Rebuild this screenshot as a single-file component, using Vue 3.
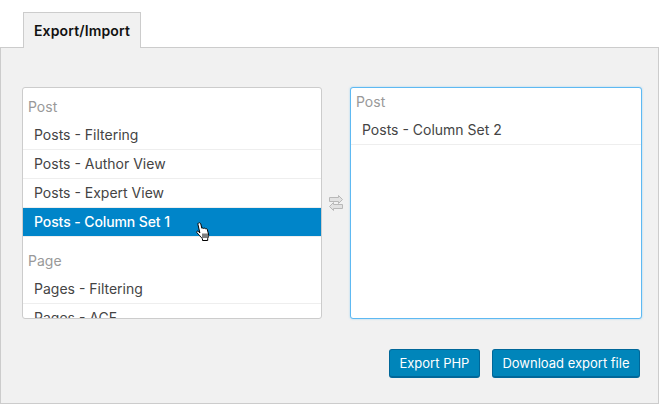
<script setup>
const left = [
  { title: 'Post', items: ['Posts - Filtering', 'Posts - Author View', 'Posts - Expert View', 'Posts - Column Set 1'] },
  { title: 'Page', items: ['Pages - Filtering', 'Pages - ACF'] },
]
const selected = 'Posts - Column Set 1'
</script>

<template>
  <div class="page">
    <div class="tabs"><div class="tab">Export/Import</div></div>
    <div class="panel">
      <div class="columns">
        <div class="list">
          <div v-for="g in left" :key="g.title" class="group">
            <div class="title">{{ g.title }}</div>
            <div
              v-for="i in g.items"
              :key="i"
              class="item"
              :class="{ sel: i === selected }"
            >
              {{ i }}
              <svg v-if="i === selected" class="cursor" width="17" height="20" viewBox="0 0 17 20">
                <path d="M3.500 1c1-.6 2 0 2.300 1l1 4.200c.6-.4 1.400-.3 1.800.2.600-.4 1.400-.3 1.800.3.700-.3 1.400-.1 1.800.5l1.300 4.800c.4 1.800 0 3.300-.8 4.500v2H7.500v-1.800c-1.200-.8-2-1.900-3-3.400L1.700 10.500c-.5-.8.700-1.900 1.600-1.200l1.600 1.700L3 2.700c-.2-.7 0-1.400.5-1.700z" fill="#fff" stroke="#000" stroke-width="1" stroke-linejoin="round"/>
                <path d="M8 11.500v4.500M10 11.500v4.500M12 11.500v4.500" stroke="#000" stroke-width="1" fill="none"/>
              </svg>
            </div>
          </div>
        </div>
        <div class="swap">
          <svg width="14" height="16" viewBox="0 0 14 16">
            <path d="M.5 2.500H9.500V.5L13.500 4.500 9.500 8.500V6.500H.5z" fill="#e2e2e2" stroke="#b8b8b8"/>
            <path d="M13.500 9.500H4.500V7.500L.5 11.500 4.500 15.500V13.500H13.500z" fill="#e2e2e2" stroke="#b8b8b8"/>
          </svg>
        </div>
        <div class="list active">
          <div class="group">
            <div class="title short">Post</div>
            <div class="item">Posts - Column Set 2</div>
          </div>
        </div>
      </div>
      <div class="actions">
        <button class="btn">Export PHP</button>
        <button class="btn">Download export file</button>
      </div>
    </div>
  </div>
</template>

<style>
html, body { margin: 0; background: #fff; }
</style>

<style scoped>
.page {
  width: 659px;
  height: 404px;
  box-sizing: border-box;
  padding-top: 12px;
  overflow: hidden;
  font-family: Inter, "Liberation Sans", sans-serif;
  font-size: 14px;
  color: #444;
}
.tabs {
  display: flex;
  padding-left: 23px;
  height: 36px;
  position: relative;
  z-index: 1;
  margin-bottom: -1px;
}
.tab {
  width: 118px;
  box-sizing: border-box;
  height: 36px;
  background: #f1f1f1;
  border: 1px solid #ccc;
  border-bottom: none;
  display: flex;
  align-items: center;
  justify-content: center;
  font-weight: 600;
  letter-spacing: .15px;
  color: #111;
  padding-bottom: 1px;
}
.panel {
  width: 659px;
  height: 357px;
  box-sizing: border-box;
  background: #f1f1f1;
  border: 1px solid #ccc;
  padding: 39px 16px 0 21px;
}
.columns {
  display: flex;
  height: 232px;
}
.list {
  flex: none;
  width: 300px;
  box-sizing: border-box;
  height: 232px;
  background: #fff;
  border: 1px solid #ccc;
  border-radius: 3px;
  overflow: hidden;
}
.list.active {
  width: 292px;
  border-color: #5eb9f2;
  box-shadow: 0 0 2px rgba(94, 185, 242, .6);
}
.swap {
  flex: none;
  width: 28px;
  display: flex;
  align-items: center;
  justify-content: center;
  padding-right: 1px;
  box-sizing: border-box;
}
.group { margin-bottom: 5px; }
.title {
  padding: 10px 5px 0;
  height: 33px;
  box-sizing: border-box;
  color: #999;
  line-height: 17px;
}
.title.short { height: 28px; padding-top: 5px; }
.item {
  position: relative;
  height: 29px;
  box-sizing: border-box;
  padding: 0 11px;
  line-height: 28px;
  border-bottom: 1px solid #eee;
}
.sel {
  background: #0085c9;
  color: #fff;
  font-weight: 500;
  letter-spacing: -.1px;
  border-bottom-color: #eee;
}
.cursor {
  position: absolute;
  left: 172px;
  top: 14px;
}
.actions {
  display: flex;
  justify-content: flex-end;
  gap: 12px;
  margin-top: 30px;
  margin-right: 2px;
}
.btn {
  height: 29px;
  box-sizing: border-box;
  padding: 0 9.5px;
  background: #0085ba;
  border: 1px solid #006799;
  border-bottom-width: 2px;
  border-radius: 3px;
  color: #fff;
  font: 400 13px Inter, "Liberation Sans", sans-serif;
  white-space: nowrap;
}
</style>
